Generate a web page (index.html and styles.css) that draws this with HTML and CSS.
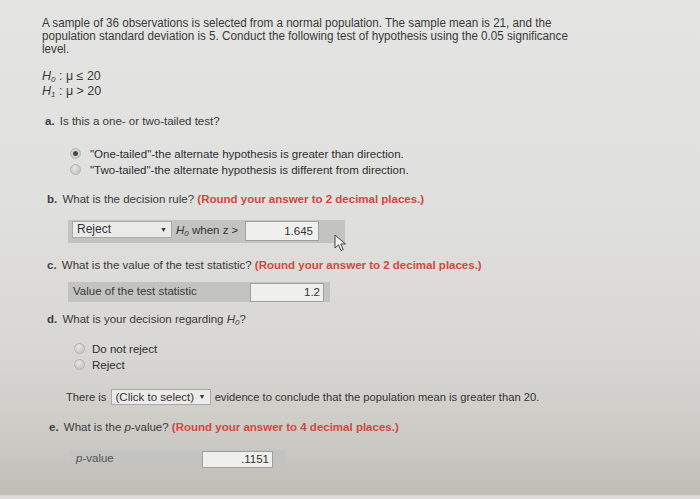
FILE: index.html
```html
<!DOCTYPE html>
<html>
<head>
<meta charset="utf-8">
<link rel="stylesheet" href="styles.css">
</head>
<body>
<div class="page">
  <p class="intro">A sample of 36 observations is selected from a normal population. The sample mean is 21, and the<br>population standard deviation is 5. Conduct the following test of hypothesis using the 0.05 significance<br>level.</p>
  <div class="hyp">
    <div><i>H</i><sub>0</sub> : μ ≤ 20</div>
    <div><i>H</i><sub>1</sub> : μ &gt; 20</div>
  </div>

  <div class="q qa"><b>a.</b> Is this a one- or two-tailed test?</div>
  <div class="radios ra">
    <div class="opt"><span class="radio on"></span>"One-tailed"-the alternate hypothesis is greater than direction.</div>
    <div class="opt"><span class="radio"></span>"Two-tailed"-the alternate hypothesis is different from direction.</div>
  </div>

  <div class="q qb"><b>b.</b> What is the decision rule? <span class="red">(Round your answer to 2 decimal places.)</span></div>
  <div class="bar barb">
    <div class="sel selb"><span>Reject</span><span class="arr">▼</span></div>
    <div class="mid"><i>H</i><sub>0</sub> when z &gt;</div>
    <div class="inp inpb">1.645</div>
  </div>

  <div class="q qc"><b>c.</b> What is the value of the test statistic? <span class="red">(Round your answer to 2 decimal places.)</span></div>
  <div class="bar barc">
    <div class="lbl">Value of the test statistic</div>
    <div class="inp inpc">1.2</div>
  </div>

  <div class="q qd"><b>d.</b> What is your decision regarding <i>H</i><sub>0</sub>?</div>
  <div class="radios rd">
    <div class="opt"><span class="radio"></span>Do not reject</div>
    <div class="opt"><span class="radio"></span>Reject</div>
  </div>
  <div class="there">There is <span class="sel seld">(Click to select) <span class="arr">▼</span></span> evidence to conclude that the population mean is greater than 20.</div>

  <div class="q qe"><b>e.</b> What is the <i>p</i>-value? <span class="red">(Round your answer to 4 decimal places.)</span></div>
  <div class="bar bare">
    <div class="lbl"><i>p</i>-value</div>
    <div class="inp inpe">.1151</div>
  </div>

  <svg class="cursor" width="14" height="18" viewBox="0 0 14 18">
    <path d="M1 1 L1 14 L4.5 10.8 L7 16.5 L9.2 15.5 L6.8 10 L11.5 10 Z" fill="#f4f4f2" stroke="#444" stroke-width="1"/>
  </svg>
</div>
</body>
</html>
```
FILE: styles.css
```css
html, body {
  margin: 0;
  padding: 0;
}
body {
  width: 700px;
  height: 499px;
  overflow: hidden;
  background: linear-gradient(to bottom, #e4e4e2 0%, #e0e0de 40%, #d8d7d3 70%, #cbcac5 88%, #bfbdb6 99%, #dedcd8 99.4%);
  font-family: "Liberation Sans", Arial, sans-serif;
  color: #353535;
}
.page {
  position: relative;
  height: 499px;
}
.intro {
  margin: 0;
  padding: 17px 0 0 42px;
  width: 600px;
  white-space: nowrap;
  font-size: 12.5px;
  line-height: 13px;
  color: #3a3a3a;
  transform: scaleX(0.932);
  transform-origin: 42px 0;
}
.hyp {
  margin: 13px 0 0 42px;
  font-size: 12.5px;
  line-height: 15px;
  color: #3a3a3a;
}
sub {
  font-size: 8px;
  line-height: 0;
  vertical-align: -2px;
  font-style: italic;
}
.q {
  font-size: 11.5px;
  line-height: 15px;
  color: #3a3a3a;
}
.q b {
  color: #404040;
  margin-right: 2px;
}
.red {
  color: #d4473e;
  font-weight: bold;
}
.qa { margin: 15px 0 0 45px; }
.qb { margin: 14.5px 0 0 47px; }
.qc { margin: 15.5px 0 0 47px; }
.qd { margin: 10.5px 0 0 47px; }
.qe { margin: 14.5px 0 0 49px; }

.radios {
  font-size: 11.5px;
  line-height: 16px;
  color: #2e2e2e;
}
.ra { margin: 16.5px 0 0 70px; }
.rd { margin: 13.5px 0 0 74px; }
.opt {
  display: flex;
  align-items: center;
}
.radio {
  width: 9px;
  height: 9px;
  border-radius: 50%;
  border: 1px solid #b4b4b2;
  background: radial-gradient(circle at 40% 35%, #e6e6e4, #bdbdbb);
  margin-right: 9px;
  box-sizing: content-box;
  display: inline-flex;
  align-items: center;
  justify-content: center;
}
.radio.on::after {
  content: "";
  width: 5px;
  height: 5px;
  border-radius: 50%;
  background: #4a4a4a;
}
.ra .radio { margin-right: 9px; }
.rd .radio { margin-right: 7px; }

.bar {
  display: flex;
  align-items: flex-start;
  background: #c3c3c0;
  font-size: 11.5px;
  color: #333;
}
.barb {
  margin: 12.5px 0 0 68px;
  width: 277px;
  height: 23px;
}
.sel {
  background: #ebebe9;
  border: 1px solid #a9a9a7;
  box-sizing: border-box;
  display: inline-flex;
  align-items: center;
  justify-content: space-between;
}
.selb {
  margin: 1px 0 0 4px;
  width: 100px;
  height: 17px;
  padding: 0 4px 0 4px;
  font-size: 12px;
}
.arr {
  font-size: 7px;
  color: #333;
}
.mid {
  margin: 3px 0 0 4px;
  width: 69px;
  font-size: 11.5px;
  line-height: 14px;
}
.inp {
  background: #efefed;
  border: 1px solid #9f9f9d;
  box-sizing: border-box;
  text-align: right;
  font-size: 11.5px;
  color: #333;
}
.inpb {
  width: 74px;
  height: 20px;
  line-height: 18px;
  padding-right: 5px;
  margin-top: 1px;
}
.barc {
  margin: 8.5px 0 0 68px;
  width: 262px;
  height: 20px;
}
.lbl {
  flex: 1;
  padding-left: 5px;
  line-height: 19px;
  color: #3a3a3a;
}
.inpc {
  width: 74px;
  height: 19px;
  line-height: 17px;
  padding-right: 3px;
  margin: 1px 6px 0 0;
}
.there {
  margin: 15px 0 0 66px;
  font-size: 11.2px;
  line-height: 18px;
  color: #333;
}
.seld {
  width: 100px;
  height: 16px;
  padding: 0 4px;
  font-size: 11.5px;
  margin: 0 1px;
  vertical-align: middle;
  position: relative;
  top: -1px;
}
.bare {
  margin: 14.5px 0 0 70px;
  width: 215px;
  height: 17px;
}
.bare .lbl {
  line-height: 17px;
  padding-left: 6px;
  color: #555;
}
.inpe {
  width: 71px;
  height: 17px;
  line-height: 15px;
  padding-right: 3px;
  margin: 1px 12px 0 0;
}
.cursor {
  position: absolute;
  left: 334px;
  top: 234px;
}
```
